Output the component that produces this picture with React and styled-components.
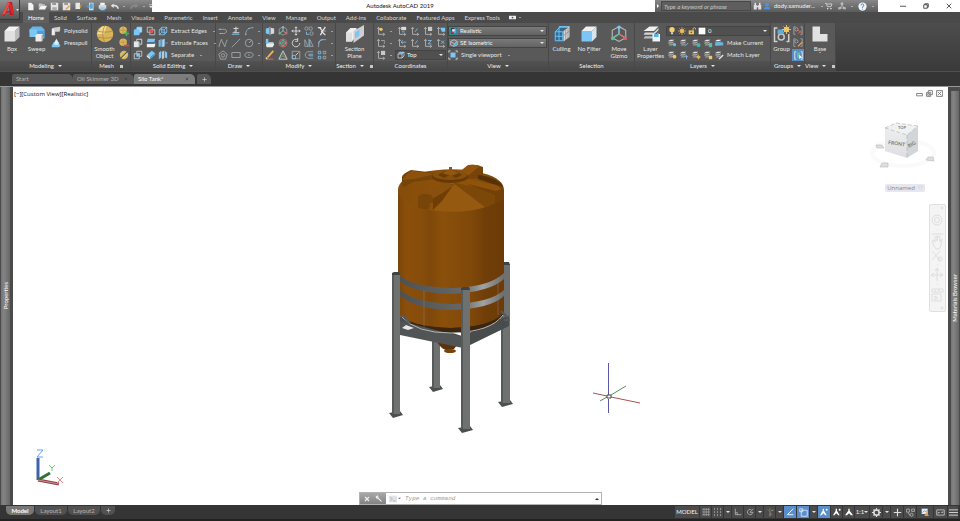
import React from "react";
import styled, { createGlobalStyle, css } from "styled-components";

const W = "#e4e4e4";
const B = "#7cc6f5";
const Y = "#f2c768";
const R = "#e0605e";
const G = "#55c79a";
const D = "#a6abaf";

const Global = createGlobalStyle`
  * { box-sizing: border-box; }
  body { margin: 0; background: #333; }
  button, input, select { font: inherit; color: inherit; border: 0; padding: 0; margin: 0; background: none; border-radius: 0; }
  button { cursor: pointer; }
  h1, h2 { margin: 0; font-weight: 400; font-size: 6px; }
`;

const App_ = styled.div`
  display: flex;
  flex-direction: column;
  min-height: 100vh;
  background: #363636;
  color: #e6e6e6;
  font-family: Lato, "Open Sans", sans-serif;
  font-size: 6px;
  line-height: 8px;
  white-space: nowrap;
`;

/* ---------- icons ---------- */

const Svg = styled.svg`
  display: block;
  flex: none;
  width: ${(p) => p.$w || 12}px;
  height: ${(p) => p.$h || p.$w || 12}px;
`;

const line = (d, c = W, w = 1) => <path d={d} fill="none" stroke={c} strokeWidth={w} />;
const fill = (d, c = W) => <path d={d} fill={c} />;
const cube = (a, b, c) => (
  <>
    {fill("M1 4l3-3h7l-3 3z", a)}
    {fill("M1 4h7v7H1z", b)}
    {fill("M8 4l3-3v7l-3 3z", c)}
  </>
);
const axes = (extra) => (
  <>
    {line("M3 2v8h7M1.500 3.500L3 1.500l1.500 2M8.500 8.500L10.500 10l-2 1.500", "#c4c4c4", 0.9)}
    {extra}
  </>
);
const layer = (extra, c = W) => (
  <>
    {fill("M1 4l3-2h5L6 4z", c)}
    {fill("M1 6.500L2.500 5.200H6l2-1.200v1L6 6.500z", "#b8b8b8")}
    {fill("M2 9l1-1.500h3L8 6v1.400L6 9z", "#a0a0a0")}
    {extra}
  </>
);
const grp = (x, y) => <circle cx={x} cy={y} r="2" fill="none" stroke={D} />;

const icons = {
  new: fill("M3 1h4l3 3v7H3z", "#f4f4f4"),
  open: <>{fill("M1 2h4l1 1h3v2H3l-2 5z", "#c8c8c8")}{fill("M3.500 5H12l-2.500 5H1z", "#f4f4f4")}</>,
  save: <>{fill("M1 1h9l1 1v9H1z", "#e4e4e4")}{fill("M3 1h5v3H3z", "#999")}{fill("M3 7h6v4H3z", "#aaa")}</>,
  saveas: <>{fill("M1 1h9l1 1v9H1z", "#e4e4e4")}{fill("M3 1h5v3H3z", "#999")}{line("M5 10l5-5", "#f0a040", 2)}</>,
  web: <>{fill("M2 1h6v9H2z", "#e8e8e8")}{fill("M7 5h4l-2-2v6z", "#e0a040")}{line("M2 10h6", "#555")}</>,
  mobile: <>{fill("M4 1h6v10H4z", "#ddd")}{fill("M5 2h4v7H5z", "#57a6d8")}{line("M1 6h5M3.500 4L1.500 6l2 2", "#4aa3df")}</>,
  print: <>{fill("M3 1h6v3H3z", "#f6f6f6")}{fill("M1 4h10v5H1z", "#d8d8d8")}{fill("M3 7h6v4H3z", "#8ecdf0")}</>,
  undo: <>{fill("M1 5l4-3v6z", W)}{line("M4 5c4-1 6 0 7 4", W, 1.800)}</>,
  redo: <>{fill("M11 5L7 2v6z", "#8b8b8b")}{line("M8 5c-4-1-6 0-7 4", "#8b8b8b", 1.800)}</>,
  more: <>{line("M3 4h6", W)}{fill("M3 6h6l-3 3z")}</>,
  box: cube("#f3f3f3", "#e0e0e0", "#bdbdbd"),
  sweep: (
    <>
      {fill("M1 3l2-2h6l2 2v6H8V5H1z", "#65b4ec")}
      {fill("M1 3h5v5H1z", B)}
      {fill("M6 4h5v4H6z", "#4f9edb")}
      {fill("M5 7l1-1h4v4l-1 1H5z", "#ededed")}
      {fill("M9 7l1-1v4l-1 1z", "#aaa")}
    </>
  ),
  polysolid: <>{fill("M1 3l2-1 8-1v4l-1 2H5v4H1z", "#cfcfcf")}{fill("M1 4h3v7H1z", "#efefef")}</>,
  presspull: <>{fill("M1 9l2-4h6l2 4-1 2H1z", B)}{fill("M4 5l2.500-4L9 5v3H4z", "#d8efff")}</>,
  smooth: (
    <>
      <circle cx="6" cy="6" r="5.500" fill="#d9b45b" />
      <path d="M2 3.500a5 5 0 0 1 5-2.800L5.500 6H.7z" fill="#f2dc93" />
      {line("M6 .500c-2 3-2 8 0 11M1 4c3 1 7 1 10 0M1 8c3 1 7 1 10 0", "#a8853a", 0.5)}
    </>
  ),
  mesh1: <><circle cx="5" cy="5" r="4.500" fill="#dab860" />{line("M5 .500v9M.500 5h9", "#a3823b", 0.6)}{line("M9 6v6M6 9h6", "#3fb45e", 1.800)}</>,
  mesh2: <><circle cx="5" cy="5" r="4.500" fill="#dab860" />{line("M5 .500v9M.500 5h9", "#a3823b", 0.6)}{line("M6 9h6", "#e2474a", 2)}</>,
  mesh3: <><circle cx="6" cy="6" r="5" fill="#dab860" />{line("M2 10l8-8", "#5a5a5a", 1.500)}{line("M4 10l6-6", "#f5e3a5")}</>,
  union: <>{fill("M1 5l1-1h2V2l1-1h6v6l-1 1H8v2l-1 1H1z", B)}{fill("M5 2h5v5H8V4H5z", "#a7dcff")}</>,
  interfere: <>{line("M1.500 1.500h6v6h-6zM4.500 4.500h6v6h-6z", "#c9c9c9")}{fill("M4 4h4v4H4z", "#e84b50")}</>,
  extract: <>{line("M1.500 4.500h6v6h-6zM4.500 1.500h6v6h-6zM1.500 4.500l3-3M7.500 4.500l3-3M7.500 10.500l3-3M1.500 10.500l3-3", B)}</>,
  subtract: <>{line("M4.500 4V1.500h6v6H8", W)}{fill("M1 4h6v7H1z", "#e6e6e6")}{fill("M7 4l1 1v5l-1 1z", B)}</>,
  slice: <>{fill("M2 1h9l-1 4H1z", B)}{fill("M1 7h9l1-2v4l-1 2H1z", "#f0f0f0")}{line("M1 6h10", "#2d6ea0")}</>,
  extrude: <>{line("M3.500 1.500v9M1.500 2.500v8", B, 1.500)}{fill("M5 2l3-1v9l-3 1z", "#a5d8f8")}{line("M8 6h4", "#4aa3df")}</>,
  intersect: <>{line("M4.500 4V1.500h6v6H8M1.500 4.500h6v6h-6z", "#cfcfcf")}{fill("M4 4h4v4H4z", B)}</>,
  thicken: <>{fill("M1 6l6-5 4 3-6 5z", B)}{fill("M1 6l4 3v2L1 8z", "#eee")}{fill("M5 9l6-5v2l-6 5z", "#5a9cc9")}</>,
  separate: <>{fill("M1 3l3-2v8l-3 2z", B)}{fill("M5 2l2-1v9l-2 1z", "#ddd")}{fill("M8 1l3 2v7L8 9z", B)}</>,
  polyline: <>{line("M1 4h7c3 0 3 5-1 5H2", D)}{line("M1 4h2M2 9h2", B)}</>,
  line3: <>{line("M2 8h8M6 1v7M3 3h6", "#d6d6d6", 1.300)}{line("M1 10h9", B)}{line("M3 8l5-6", D)}</>,
  arc: <>{line("M2 11C2 5 5 2 11 2", D)}{line("M1 10h2M5 3h2M10 2h1", B)}</>,
  spline: <>{line("M1 10L4 2l4 8 3-8", D)}{line("M1 10h1M4 2h1M8 10h1", B)}</>,
  xline: line("M1 11L11 1", D),
  circle: <>{line("M6 6l3-3", B)}<circle cx="6" cy="6" r="4.500" fill="none" stroke={D} /></>,
  polygon: <><path d="M6 1l5 4-2 6H3L1 5z" fill="none" stroke={D} /><circle cx="6" cy="6.500" r="2" fill="none" stroke={D} /></>,
  rect: line("M1 3h10v6H1z", D),
  ellipse: <><ellipse cx="6" cy="6" rx="5" ry="3" fill="none" stroke={D} />{line("M5 6h2", B)}</>,
  mirror3: <>{fill("M1 3l4-1v8l-4-1z", B)}{line("M6 1v10", W, 0.8)}{fill("M7 2l4 1v6l-4 1z", "#d8d8d8")}</>,
  gizmo: (
    <>
      {line("M6 1l4.500 2.500v5L6 11 1.500 8.500v-5zM6 6v-5M6 6l5 3M6 6L1 9", "#bdbdbd", 0.7)}
      {line("M6 6V1", B, 0.7)}{line("M6 6L1.800 9", G, 0.7)}{line("M6 6l4.200 3", R, 0.7)}
      <circle cx="6" cy="1.500" r="1.200" fill={B} /><circle cx="1.800" cy="9" r="1.200" fill={G} /><circle cx="10.200" cy="9" r="1.200" fill={R} />
    </>
  ),
  moveicon: line("M6 1v10M1 6h10M4.500 2.500L6 1l1.500 1.500M4.500 9.500L6 11l1.500-1.500M2.500 4.500L1 6l1.500 1.500M9.500 4.500L11 6l-1.500 1.500", W),
  copy: <>{grp(3, 3)}{grp(8, 3)}{grp(9, 9)}{line("M3 7v3h3", B)}</>,
  trim: <>{line("M1 2h4M3 2l4 4M10 1L4 11M5 6l5 5", "#e6e6e6", 1.500)}{line("M7 6h4", "#aaa")}</>,
  align: <>{fill("M1 1h3v6H1z", B)}{fill("M1 8l4-3h5l1 3-2 3H2z", "#eaeaea")}{line("M4 6h6", B)}</>,
  rotate3: <><circle cx="6" cy="6" r="4.800" fill="none" stroke={R} /><circle cx="6" cy="6" r="3" fill="none" stroke={G} />{line("M6 1v10M1 6h10", D, 0.7)}</>,
  rotate: line("M8 2a4.500 4.500 0 1 0 2.500 4M8 0v4h-3", W),
  mirror: <>{line("M1 10V2l4 8z", D)}{line("M6 1v10", B)}{line("M7 10V2l4 8z", D)}</>,
  fillet: <>{line("M2 11V7c0-3 2-5 5-5h4", D)}{line("M2 7c0-3 2-5 5-5", B)}</>,
  erase: <>{line("M3 9l7-8", "#f0b646", 2.200)}{fill("M1 8l3 3H1z", "#f1e0b0")}{line("M3 11h7", R, 1.200)}</>,
  scale3: <>{line("M6 1l5 10H1z", W)}{line("M6 1v6M6 7l4 3M6 7l-4 3", G, 0.8)}{line("M6 7l4 3", R)}</>,
  scale: <>{line("M1.500 1.500h9v9h-9z", D)}{line("M1.500 6.500h4v4h-4z", B)}{line("M6 6l3-3", W)}</>,
  offset: <>{line("M11 2H6C0 2 0 10 6 10h5", D)}{line("M11 5H7c-2 0-2 2 0 2h4", B)}</>,
  array: <>{line("M1.500 1.500h3v3h-3zM1.500 7.500h3v3h-3z", B)}{line("M7.500 1.500h3v3h-3zM7.500 7.500h3v3h-3z", D)}</>,
  section: <>{fill("M0 5l3-3h4v5l-3 4H0z", "#f0f0f0")}{fill("M5 4l7-4v7l-7 5z", "#cfcfcf")}{fill("M6 5l3-2v4L6 9z", B)}{fill("M0 5h4v6H0z", "#dedede")}</>,
  ucs1: axes(<circle cx="6" cy="4" r="2" fill={Y} />),
  ucs2: axes(<>{fill("M5 1h6v4H5z", "#dadada")}{line("M6 7h3", B)}</>),
  ucs3: axes(line("M6 7l3-4", B)),
  ucs4: axes(fill("M6 1h5v5H6z", "#c8c8c8")),
  ucs5: axes(fill("M5 2h6v5H7z", B)),
  ucs6: axes(line("M6 3h4v4", D)),
  ucs7: axes(line("M5 5h6M7 3L5 5l2 2", B)),
  ucs8: axes(line("M6 3l4 4M10 3L6 7", B)),
  ucs9: axes(line("M6 3h4L6 7h4", B)),
  culling: (
    <>
      {fill("M1 4l3-3h3v10H1z", "#2f6c95")}
      {line("M1.500 4.500h5v6h-5zM4 1.500v9M1.500 7.500h5M1.500 4.500l3-3h6l-3 3M4 1l7 0", B, 0.6)}
      {fill("M7 4l4-3v7l-4 3z", "#d5d5d5")}
      {line("M8.500 3v7M10 2v7M7 7l4-3", "#888", 0.5)}
    </>
  ),
  nofilter: cube("#f0f0f0", B, "#d8e4ec"),
  props: (
    <>
      {fill("M1 4l4-3h6L8 4z", "#f0f0f0")}
      {fill("M1 6.500L2 5h6l3-3v1.500L8 6.500z", "#d4d4d4")}
      {fill("M1 9l1-1.500h6L11 5v1L8 9z", "#bdbdbd")}
      {fill("M7 6h5v5H7z", "#e9f6ff")}
      {fill("M8 6h3v2H8z", "#57afe8")}
    </>
  ),
  l1: layer(<circle cx="9" cy="8" r="2" fill="#52c9dc" />),
  l2: layer(line("M7 10l4-4", "#7fc0e8")),
  l3: layer(<circle cx="9" cy="8.500" r="2.500" fill="#3fb8a8" />),
  l4: layer(fill("M7 6h4v5H7z", "#55bcae")),
  l5: layer(fill("M2 5h9v4H1z", "#68b3e0"), "#f5f5f5"),
  l6: layer(<circle cx="9" cy="8" r="2.200" fill={Y} />),
  l7: layer(line("M7 8h4M9 6v5", "#7fb6e8")),
  l8: layer(<><circle cx="9" cy="8.500" r="2" fill="#efb347" />{line("M9 5.500v6M6 8.500h6", "#efb347", 0.7)}</>),
  l9: layer(fill("M7 7h4v4H7z", Y)),
  l10: layer(line("M6 11l5-5", "#eee", 1.500)),
  bulb: <><circle cx="6" cy="4" r="4" fill="#f4cf74" />{fill("M4.500 8h3v3h-3z", "#cfcfcf")}</>,
  sun: <><circle cx="6" cy="6" r="3" fill="#f4bd54" />{line("M6 0v12M0 6h12M2 2l8 8M10 2l-8 8", "#f4bd54", 1)}</>,
  lock: <>{fill("M1 5h8v6H1z", "#f0bd59")}{line("M7.500 5V3a2 2 0 0 1 4 0v1", "#f0bd59", 1.200)}{fill("M4 7h2v2H4z", "#6b5020")}</>,
  swatch: fill("M1 1h10v10H1z", "#fff"),
  group: (
    <>
      {line("M3 2H1v9h2M9 11h1.500V6", "#d0d0d0")}
      <circle cx="5.500" cy="8" r="2" fill="none" stroke="#c6c6c6" />
      {fill("M3 3h4v3H3z", "#5aaee0")}
      <circle cx="9" cy="3" r="1.800" fill={Y} />{line("M9 0v6M6 3h6M7 1l4 4M11 1L7 5", Y, 0.6)}
    </>
  ),
  ungroup: <>{line("M3 1H1v9h2M9 1h2v9H9", D)}{grp(4, 4)}{line("M6 5l5 4M11 5L6 9", R, 1.200)}</>,
  groupedit: <>{line("M3 1H1v9h2M9 1h2v9H9", D)}{grp(4, 4)}{line("M6 10l5-5", "#efaa4d", 1.500)}</>,
  grpsel: <>{line("M3 1H1v10h2M9 1h2v10H9", "#fff")}{fill("M4 2h4v7H4z", G)}{fill("M7 5l4 4H9l-2 2z", "#fff")}</>,
  base: fill("M1 1h5v5h5v5H1z", "#e2e2e2"),
  realistic: <>{fill("M0 0h12v12H0z", "#174850")}{fill("M2 5h4v5H2z", "#ce3941")}{fill("M6 2h4v8H6z", "#5ea5e4")}<circle cx="5" cy="5" r="2" fill="#e8e8e8" />{line("M.500.500h11v11H.500z", "#4fc0bf")}</>,
  iso: <>{line("M6 1l5 3v5l-5 2-5-2V4zM1 4l5 3 5-3M6 7v4", "#cfdde6")}{fill("M6 7l4-2.500v4L6 10.500z", "#62b5ea")}</>,
  top: <>{line("M1.500 4.500h6v6h-6zM7.500 4.500l3-3v6l-3 3", W)}{fill("M1 4l3-3h7L8 4z", B)}</>,
  viewport: <>{line("M3 1H1v2M9 1h2v2M3 11H1V9M9 11h2V9", W)}{fill("M3 3h6v6H3z", B)}</>,
  rec: <>{fill("M0 3h12v6H0z", "#eee")}<circle cx="6" cy="6" r="1.500" fill="#555" /></>,
  find: fill("M1 4h4v6H1zM7 4h4v6H7zM2 1h2v3H2zM8 1h2v3H8zM5 5h2v2H5z", "#e0e0e0"),
  user: <><circle cx="6" cy="4" r="3" fill="#4f91df" />{fill("M1 11c0-3 2-4 5-4s5 1 5 4z", "#4f91df")}</>,
  cart: <>{line("M0 2h2l1.500 5H9l1.500-4H3", "#ddd", 1.200)}{fill("M3 9h2v2H3zM8 9h2v2H8z")}</>,
  share: line("M6 1v4M6 5L2 10M6 5l4 5M4.500 1.500h3v2h-3zM.500 8.500h3v2h-3zM8.500 8.500h3v2h-3zM3 9h6", "#d7d7d7"),
  help: <><circle cx="6" cy="6" r="5.500" fill="#edf4fb" />{line("M4 4.500c0-3 4.500-2 3.500.500L6 7v1M6 9v1", "#356ca8", 1.200)}</>,
  min: line("M0 6.500h12", "#222", 1.500),
  max: line("M1.500 3.500h7v7h-7zM3.500 3V1.500h7v7H9", "#222", 1.500),
  close: line("M1.500 1.500l9 9M10.500 1.500l-9 9", "#222", 1.500),
  tabx: line("M2 2l8 8M10 2l-8 8", "#3f3f3f", 2),
  plus: line("M6 1v10M1 6h10", "#dedede", 1.500),
  grid: line("M3 0v12M6.500 0v12M10 0v12M0 2h12M0 6h12M0 10h12", "#cfcfcf", 0.7),
  ortho: line("M2 1v9h9M2 7h3v3", "#c7c7c7"),
  polar: line("M10 7a4 4 0 1 1-2-4.500M6 6.500h5M6 6.500L11 1", "#c7c7c7"),
  isodraft: <>{line("M2 1l8 10", "#bc5b58")}{line("M6 0v8", "#4aa96e")}{line("M6 8v4M8 4l3-1", "#c7c7c7")}</>,
  otrack: line("M11 1L2 10h9", "#fff", 1.300),
  osnap: line("M3 3h8v8H3zM1 1h4v4H1z", "#e5f3ff"),
  anno: fill("M5 1h2v3l5 7H9L6 8l-3 3H0l5-7z", "#fff"),
  annoA: <>{fill("M4 1h2v3l4 7H8L5 8l-3 3H0l4-7z", "#fff")}<circle cx="10" cy="2.500" r="1.500" fill="#fff" /></>,
  gear: <><circle cx="6" cy="6" r="3.500" fill="none" stroke="#e0e0e0" strokeWidth="2" />{line("M6 0v3M6 9v3M0 6h3M9 6h3M2 2l2 2M8 8l2 2M10 2L8 4M4 8l-2 2", "#e0e0e0", 1.500)}</>,
  shapes: <>{line("M.500 1.500h4v4h-4zM7.500 1.500h4v3h-4zM3 6l2 4", "#bdbdbd")}<circle cx="7.500" cy="9" r="2" fill="none" stroke="#bdbdbd" /></>,
  perf: <>{fill("M1 1h9v8H1z", "#e4edf4")}{line("M2 7l3-3 2 2 3-3", "#4a8abd")}{fill("M8 6l4 6H5z", "#ef9a45")}</>,
  clean: <>{line("M1 2.500h10v7H1z", "#d6d6d6")}{line("M7 6h2V4.500M5 6H3v1.500", "#d6d6d6")}</>,
  menu: line("M0 2.500h12M0 6h12M0 9.500h12", "#dedede", 1.200),
  wrench: <>{line("M4 4l7 7", "#eee", 2)}{fill("M1 1l2 1 1-2 2 3-1 3-3 0z", "#eee")}</>,
  whitex: line("M2 2l8 8M10 2l-8 8", "#eee", 2.500),
  prompt: <>{fill("M0 1h12v10H0z", "#dfe4e9")}{line("M2 3l3 3-3 3M6 9h4", "#9ba3ab")}</>,
};

const Icon = ({ n, w = 10, h }) => (
  <Svg viewBox="0 0 12 12" $w={w} $h={h} aria-hidden="true">{icons[n]}</Svg>
);

/* ---------- title bar ---------- */

const Header = styled.header`
  display: grid;
  grid-template-columns: 20px 1fr;
  grid-template-rows: 12px 11px;
  background: #4b4b4b;
`;
const AppButton = styled.button`
  grid-row: 1 / 3;
  height: 20px;
  display: flex;
  align-items: center;
  justify-content: center;
  background: linear-gradient(#929292, #555);
  border-right: 1px solid #373737;
  border-bottom: 1px solid #373737;
`;
const TitleRow = styled.div`
  display: flex;
  background: #fff;
  color: #222;
`;
const Quick = styled.div`
  display: flex;
  align-items: center;
  width: 132px;
  padding-left: 4px;
  background: linear-gradient(#8a8a8a, #5d5d5d);
`;
const IconButton = styled.button`
  display: flex;
  align-items: center;
  justify-content: center;
  flex: none;
  width: ${(p) => p.$w || 12}px;
  height: ${(p) => p.$h || 12}px;
  ${(p) => p.$on && css`background: #5a8cc6;`}
`;
const Title = styled.h1`
  flex: 1;
  padding-right: 7px;
  text-align: center;
  line-height: 12px;
  color: #111;
`;
const Info = styled.div`
  display: flex;
  align-items: center;
  width: 223px;
  color: #eee;
  background: linear-gradient(#878787, #5b5b5b);
`;
const Search = styled.input`
  width: 90px;
  height: 10px;
  padding: 0 2px;
  background: #5e5e5e;
  border: 1px solid #494949;
  font-style: italic;
  outline: 0;
  &::placeholder { color: #c8c8c8; opacity: 1; }
`;
const UserButton = styled.button`
  display: flex;
  align-items: center;
  gap: 3px;
  width: 58px;
  color: #f4f4f4;
`;
const WindowButtons = styled.div`
  display: flex;
  align-items: center;
  justify-content: flex-end;
  width: 82px;
`;
const MenuRow = styled.nav`
  display: flex;
  padding-left: 3px;
  background: #4a4a4a;
`;
const MenuTab = styled.button`
  height: 11px;
  padding: 0 5px;
  color: ${(p) => (p.$on ? "#fff" : "#d8d8d8")};
  background: ${(p) => (p.$on ? "#606060" : "none")};
`;

/* ---------- ribbon ---------- */

const Ribbon = styled.div`
  display: flex;
  height: 49px;
  background: linear-gradient(#4d4d4d, #3a3a3a);
  border-bottom: 1px solid #4f4f4f;
`;
const PanelBox = styled.section`
  flex: none;
  display: flex;
  flex-direction: column;
  width: ${(p) => p.$w}px;
  background: #595959;
  border-right: 1px solid #484848;
`;
const PanelBody = styled.div`
  flex: 1;
  display: flex;
  padding: 2px 0 0 ${(p) => p.$pad}px;
`;
const PanelTitle = styled.h2`
  display: flex;
  align-items: center;
  justify-content: center;
  gap: 4px;
  height: 10px;
  color: #eee;
  background: linear-gradient(#525252, #474747);
`;
const Stack = styled.div`
  display: flex;
  flex-direction: column;
`;
const Row = styled.div`
  display: flex;
  align-items: center;
  height: 12px;
`;
const BigButton = styled.button`
  display: flex;
  flex-direction: column;
  align-items: center;
  width: ${(p) => p.$w}px;
  height: 36px;
  line-height: 7px;
  text-align: center;
  white-space: pre-line;
`;
const BigLabel = styled.span`
  padding-top: 2px;
`;
const TextButton = styled.button`
  display: flex;
  align-items: center;
  gap: 3px;
  height: 12px;
`;
const Arrow = styled.span`
  flex: none;
  width: 0;
  height: 0;
  border: 2px solid transparent;
  border-top-color: #e6e6e6;
  border-bottom-width: 0;
  ${(p) => p.$small && css`border-left-width: 1px; border-right-width: 1px; border-top-width: 1px; margin: 0 3px;`}
`;
const Launcher = styled.span`
  width: 3px;
  height: 3px;
  margin-left: 2px;
  background: #c8c8c8;
`;
const Drop = styled.label`
  display: flex;
  align-items: center;
  gap: 2px;
  height: 10px;
  width: ${(p) => p.$w}px;
  padding: 0 2px 0 1px;
  background: ${(p) => (p.$dark ? "#505050" : "linear-gradient(#7a7a7a, #636363)")};
  border: 1px solid #444;
  color: #f4f4f4;
`;
const Select = styled.select`
  flex: 1;
  min-width: 0;
  height: 8px;
  line-height: 8px;
  appearance: none;
  outline: 0;
`;

const Big = ({ n, w, label, drop, size = 18 }) => (
  <BigButton $w={w}>
    <Icon n={n} w={size} />
    <BigLabel>{label}</BigLabel>
    {drop && <Arrow $small />}
  </BigButton>
);
const Ic = ({ n, w = 13, label }) => (
  <IconButton $w={w} aria-label={label || n}><Icon n={n} w={10} /></IconButton>
);
const Tx = ({ n, children, drop }) => (
  <TextButton>{n && <Icon n={n} w={10} />}{children}{drop && <Arrow $small />}</TextButton>
);
const Combo = ({ w, list, value, label, dark }) => (
  <Drop $w={w} $dark={dark}>
    {list.map((n) => <Icon key={n} n={n} w={8} />)}
    <Select aria-label={label} defaultValue={value}><option>{value}</option></Select>
    <Arrow />
  </Drop>
);
const Panel = ({ w, pad = 0, title, drop, launch, children }) => (
  <PanelBox $w={w}>
    <PanelBody $pad={pad}>{children}</PanelBody>
    <PanelTitle>{title}{drop && <Arrow />}{launch && <Launcher />}</PanelTitle>
  </PanelBox>
);
const IconRow = ({ list, w, drop }) => (
  <Row>{list.map((n) => <Ic key={n} n={n} w={w} />)}{drop && <Arrow $small />}</Row>
);

/* ---------- file tabs ---------- */

const FileTabs = styled.div`
  display: flex;
  align-items: flex-end;
  height: 15px;
  padding: 0 0 2px 12px;
  background: #353535;
  border-bottom: 1px solid #999;
`;
const FileTab = styled.button`
  display: flex;
  align-items: center;
  justify-content: space-between;
  width: ${(p) => p.$w}px;
  height: 10px;
  padding: 0 6px 0 4px;
  border-radius: 2px 5px 0 0;
  color: ${(p) => (p.$on ? "#fff" : "#b4b4b4")};
  background: ${(p) => (p.$on ? "#7d7d7d" : "#585858")};
  ${(p) => p.$center && css`justify-content: center; padding: 0; margin-left: 2px;`}
`;

/* ---------- work area ---------- */

const Work = styled.main`
  flex: 1;
  display: flex;
  min-height: 300px;
`;
const Palette = styled.aside`
  flex: none;
  display: flex;
  align-items: center;
  justify-content: center;
  width: ${(p) => (p.$right ? 12 : 13)}px;
  color: #fff;
  background: linear-gradient(90deg, #747474, #848484 30%, #666);
  border-style: solid;
  border-color: #4b4b4b;
  border-width: ${(p) => (p.$right ? "4px 1px 0 3px" : "0 3px 0 1px")};
`;
const Vertical = styled.span`
  writing-mode: vertical-rl;
  transform: rotate(180deg);
`;
const Canvas = styled.div`
  position: relative;
  flex: 1;
  min-width: 0;
  background: #fff;
  color: #111;
  overflow: hidden;
`;
const Scene = styled.svg`
  position: absolute;
  inset: 0;
  width: 100%;
  height: 100%;
`;
const ViewLabel = styled.div`
  position: absolute;
  left: 1px;
  top: 3px;
  font-family: "Open Sans", sans-serif;
`;
const ViewWindow = styled.div`
  position: absolute;
  right: 5px;
  top: 3px;
  display: flex;
  gap: 3px;
`;
const CubeArea = styled.div`
  position: absolute;
  right: 6px;
  top: 31px;
  display: flex;
  flex-direction: column;
  align-items: center;
  width: 74px;
`;
const Unnamed = styled.button`
  display: flex;
  align-items: center;
  gap: 3px;
  height: 8px;
  padding: 0 2px;
  margin-top: 14px;
  color: #85858f;
  background: #e7e7ef;
  border-radius: 2px;
  font-family: "Open Sans", sans-serif;
`;
const NavBar = styled.div`
  position: absolute;
  right: 2px;
  top: 117px;
  width: 17px;
  height: 108px;
  border: 1px solid #e0e0e0;
  border-radius: 2px;
  background: #f4f4f4;
`;
const Ucs = styled.svg`
  position: absolute;
  left: 17px;
  bottom: 15px;
  width: 40px;
  height: 44px;
`;
const CommandLine = styled.div`
  position: absolute;
  left: 0;
  right: 0;
  bottom: 0;
  display: flex;
  width: 26%;
  min-width: 200px;
  height: 13px;
  margin: 0 auto;
  background: #fff;
  border: 1px solid #b2b2b2;
`;
const CommandTools = styled.div`
  display: flex;
  align-items: center;
  justify-content: space-evenly;
  width: 26px;
  background: linear-gradient(#a8a8a8, #838383);
`;
const CommandInput = styled.input`
  flex: 1;
  min-width: 0;
  padding-left: 2px;
  outline: 0;
  font-family: "Liberation Mono", monospace;
  font-style: italic;
  &::placeholder { color: #999; opacity: 1; }
`;
const CommandPrompt = styled.div`
  display: flex;
  align-items: center;
  gap: 1px;
  padding: 0 2px 0 3px;
  color: #777;
`;
const UpArrow = styled.button`
  display: flex;
  align-items: center;
  width: 6px;
`;

/* ---------- status bar ---------- */

const Status = styled.footer`
  display: flex;
  justify-content: space-between;
  height: 16px;
  background: #353535;
  border-bottom: 2px solid #222;
`;
const LayoutTabs = styled.div`
  display: flex;
  align-items: flex-start;
  gap: 1px;
  padding: 1px 0 0 6px;
`;
const LayoutTab = styled.button`
  height: 9px;
  width: ${(p) => p.$w}px;
  border-radius: 0 0 5px 5px;
  color: ${(p) => (p.$on ? "#fff" : "#b4b4b4")};
  font-weight: ${(p) => (p.$on ? 700 : 400)};
  background: ${(p) => (p.$on ? "#777" : "#515151")};
  display: flex;
  align-items: center;
  justify-content: center;
`;
const StatusTools = styled.div`
  display: flex;
  align-items: center;
  gap: 1px;
  padding-right: 2px;
`;
const StatusButton = styled.button`
  display: flex;
  align-items: center;
  justify-content: center;
  width: ${(p) => p.$w || 12}px;
  height: 12px;
  color: #f4f4f4;
  background: ${(p) => (p.$on ? "#5b8ecb" : "#4b4b4b")};
`;

const Leg = ({ x, y, h, w = 9 }) => (
  <>
    <path d={`M${x - 3} ${y + h - 2}l${w + 3}-2 3 4-${w + 2} 3z`} fill="#4c4f4f" />
    <rect x={x} y={y} width={w} height={h - 1} fill="#6f7171" />
    <rect x={x} y={y} width="2" height={h - 1} fill="#575a5a" />
    <path d={`M${x} ${y + 1}v-2l2-1h${w - 3}l1 3z`} fill="#3f4242" />
  </>
);

const Tank = () => (
  <g>
    <defs>
      <linearGradient id="shell">
        <stop offset="0" stopColor="#7b4509" />
        <stop offset=".08" stopColor="#8b4f0b" />
        <stop offset=".24" stopColor="#864c0a" />
        <stop offset=".3" stopColor="#7f470a" />
        <stop offset=".42" stopColor="#8a500b" />
        <stop offset=".7" stopColor="#7f480a" />
        <stop offset=".82" stopColor="#703e08" />
        <stop offset="1" stopColor="#6b3b07" />
      </linearGradient>
      <linearGradient id="band">
        <stop offset="0" stopColor="#4e5151" />
        <stop offset=".6" stopColor="#656767" />
        <stop offset=".8" stopColor="#a1a3a3" />
        <stop offset="1" stopColor="#6b6d6d" />
      </linearGradient>
      <linearGradient id="dome">
        <stop offset="0" stopColor="#854d0b" />
        <stop offset=".6" stopColor="#905309" />
        <stop offset="1" stopColor="#774408" />
      </linearGradient>
    </defs>
    <Leg x={432} y={340} h={49} w={8} />
    <Leg x={501} y={264} h={140} />
    <path d="M400 316l62 20 45-20v11l-45 20-62-13z" fill="#4a4d4d" />
    <path d="M434 338l6 8q6 7 14 3l10-13z" fill="#5b340b" />
    <ellipse cx="450" cy="351" rx="6" ry="2" fill="#7a430b" />
    <path d="M400 310q6 23 52 23 44 0 52-20v-8H400z" fill="#30271c" />
    <path d="M398 190v124q12 13 53 14 42-1 53-16V190z" fill="url(#shell)" />
    <path d="M404 318q12 9 47 10 38-1 51-13-9 18-51 18-36-1-47-15z" fill="#3c2610" />
    <path d="M398 190c0-7 7-13 22-17 20-5 45-5 62 0 16 4 22 10 22 17 0 14-24 22-53 22s-53-10-53-22z" fill="url(#dome)" />
    <path d="M452 182l-19 28c15 3 38 2 52-3z" fill="#95590f" />
    <path d="M452 182l33 25 9-5-8-12z" fill="#7c480a" />
    <path d="M402 186v-9q0-3 9-7l25 3-1 6-22 3-9 5z" fill="#764308" />
    <path d="M403 180q1-5 9-9l24 3-22 5z" fill="#8c510c" />
    <path d="M457 174l12-9q7-1 14 2v11l-14 1z" fill="#774309" />
    <path d="M458 173l10-8q7-1 12 1l-11 9z" fill="#8f530d" />
    <path d="M478 175q19 2 25 12l-13-4-12-4z" fill="#563006" />
    <path d="M433 210v-13l15-12 6-1-12 17z" fill="#6f3e07" />
    <path d="M418 199q0-4 6-5l18-11 12 2-13 9q-8 4-8 5v2h-15z" fill="#87500c" />
    <path d="M418 198q0-4 7-4t8 4v5h-3l-1 6q-7 1-11-2z" fill="#784409" />
    <path d="M467 180l33 7q4 3 4 7v5l-9 5v-9l-26-10z" fill="#734108" />
    <path d="M466 179l30 6 6 4-6 2-28-7z" fill="#8f530d" />
    <ellipse cx="450" cy="177" rx="18" ry="6" fill="#683908" />
    <ellipse cx="450" cy="175" rx="17" ry="5" fill="#86500c" />
    <path d="M438 175l6-4 6 2 6-2 6 4-6 3-6-3-6 3z" fill="#6a3b07" />
    <path d="M442 173l7-3v-3h3v3l7 3-8 3z" fill="#905711" />
    <path d="M399 275q13 12 52 13 39-1 53-15v6q-14 13-53 15-37-1-52-13z" fill="url(#band)" />
    <path d="M399 289q14 13 52 15 39-1 53-14v6q-14 13-53 14-36-1-52-15z" fill="url(#band)" />
    <path d="M424 290v38M498 277v38" fill="none" stroke="#85817b" strokeWidth=".7" opacity=".7" />
    <path d="M400 321l63 16v11l-63-13z" fill="#525555" />
    <path d="M466 337l43-21v10l-43 21z" fill="#484c4c" />
    <path d="M402 328l4-3 8 3-6 2z" fill="#e8e8e8" />
    <path d="M402 317q14 16 49 16 40-1 52-18" fill="none" stroke="#b5b7b7" strokeWidth="1" />
    <path d="M402 315l8 8M397 318v12M501 311l7 7M504 320h6" stroke="#575a5a" strokeWidth="2" />
    <Leg x={392} y={274} h={141} w={8} />
    <Leg x={461} y={289} h={141} />
  </g>
);

const ViewCube = () => (
  <Svg viewBox="872 118 74 52" $w={74} $h={52} role="img" aria-label="View cube">
    <defs>
      <linearGradient id="face" x2="0" y2="1">
        <stop offset="0" stopColor="#eceeef" /><stop offset="1" stopColor="#dddfe1" />
      </linearGradient>
    </defs>
    <ellipse cx="907" cy="153" rx="31" ry="13" fill="none" stroke="#fafafa" strokeWidth="4" />
    <path d="M889 128l11-5 22 3-11 9z" fill="#f0f1f2" />
    <path d="M889 128l22 7v23l-22-7z" fill="url(#face)" />
    <path d="M911 135l11-9v25l-11 7z" fill="#d3d6d8" />
    <path d="M889 128l22 7 11-9M911 135v23M889 128l11-5 22 3" fill="none" stroke="#aaaeb0" strokeWidth=".6" strokeDasharray="4 2" />
    <g fill="#777c80" fontFamily="Lato, sans-serif" fontWeight="700" fontSize="5">
      <text x="892" y="144" transform="rotate(8 892 144)">FRONT</text>
      <text x="913" y="148" transform="rotate(-30 913 148)">RIG</text>
      <text x="902" y="129" fontSize="4">TOP</text>
    </g>
    <g fill="#dcdedf" stroke="#b9bbbc" strokeWidth=".6">
      <path d="M880 145l6 0 2 3-7 0z" /><path d="M886 163l6 0 0 4-8 0z" /><path d="M932 157l5 0 1 4-8-1z" />
    </g>
  </Svg>
);

const menu = ["Home", "Solid", "Surface", "Mesh", "Visualize", "Parametric", "Insert", "Annotate", "View", "Manage", "Output", "Add-ins", "Collaborate", "Featured Apps", "Express Tools"];

export default function App() {
  return (
    <App_>
      <Global />
      <Header>
        <AppButton aria-label="Application menu">
          <Svg viewBox="0 0 18 18" $w={18}>
            <path d="M1 14L7 1h4l2 13H9l-.500-3-4 1L3 15z" fill="#c4161d" />
            <path d="M1 14L7 1l2 1-5 11z" fill="#ef4b4b" />
            <path d="M8 5l.500 5L5.500 10.500z" fill="#7b7b7b" />
            <path d="M10 2l3 12-2-1-3-9z" fill="#da2c30" />
            <path d="M15 8h3l-1.500 2z" fill="#ddd" />
          </Svg>
        </AppButton>
        <TitleRow>
          <Quick>
            {["new", "open", "save", "saveas", "web", "mobile", "print", "undo"].map((n) => (
              <IconButton key={n} aria-label={n}><Icon n={n} w={9} /></IconButton>
            ))}
            <Arrow $small />
            <IconButton aria-label="redo"><Icon n="redo" w={9} /></IconButton>
            <Arrow $small />
            <IconButton $w={6} aria-label="customize"><Icon n="more" w={8} /></IconButton>
          </Quick>
          <Title>Autodesk AutoCAD 2019</Title>
          <Info>
            <IconButton $w={6} aria-label="collapse"><Svg viewBox="0 0 4 4" $w={4}><path d="M1 0l2 2-2 2z" fill="#fff" /></Svg></IconButton>
            <Search aria-label="Search" placeholder="Type a keyword or phrase" />
            <IconButton aria-label="find"><Icon n="find" w={9} /></IconButton>
            <UserButton><Icon n="user" w={8} />dody.samuder...<Arrow $small /></UserButton>
            <IconButton $w={15} aria-label="store"><Icon n="cart" w={8} /></IconButton>
            <IconButton aria-label="apps"><Icon n="share" w={8} /></IconButton>
            <Arrow $small />
            <IconButton $w={13} aria-label="help"><Icon n="help" w={9} /></IconButton>
            <Arrow $small />
          </Info>
          <WindowButtons>
            {["min", "max", "close"].map((n) => <IconButton key={n} $w={23} aria-label={n}><Icon n={n} w={6} /></IconButton>)}
          </WindowButtons>
        </TitleRow>
        <MenuRow>
          {menu.map((m, i) => <MenuTab key={m} $on={i === 0}>{m}</MenuTab>)}
          <IconButton $w={24} $h={11} aria-label="ribbon display"><Icon n="rec" w={7} /><Arrow $small /></IconButton>
        </MenuRow>
      </Header>

      <Ribbon>
        <Panel w={92} pad={2} title="Modeling" drop>
          <Big n="box" w={20} label="Box" drop />
          <Big n="sweep" w={29} label="Sweep" drop />
          <Stack>
            <Tx n="polysolid">Polysolid</Tx>
            <Tx n="presspull">Presspull</Tx>
          </Stack>
        </Panel>
        <Panel w={39} title="Mesh" launch>
          <Big n="smooth" w={25} label={"Smooth\nObject"} />
          <Stack>{["mesh1", "mesh2", "mesh3"].map((n) => <Ic key={n} n={n} />)}</Stack>
        </Panel>
        <Panel w={85} title="Solid Editing" drop>
          <Stack>
            <Row><Ic n="union" /><Ic n="interfere" w={14} /><Tx n="extract" drop>Extract Edges</Tx></Row>
            <Row><Ic n="subtract" /><Ic n="slice" w={14} /><Tx n="extrude" drop>Extrude Faces</Tx></Row>
            <Row><Ic n="intersect" /><Ic n="thicken" w={14} /><Tx n="separate" drop>Separate</Tx></Row>
          </Stack>
        </Panel>
        <Panel w={47} title="Draw" drop>
          <Stack>
            <IconRow list={["polyline", "line3", "arc"]} drop />
            <IconRow list={["spline", "xline", "circle"]} drop />
            <IconRow list={["polygon", "rect", "ellipse"]} drop />
          </Stack>
        </Panel>
        <Panel w={73} title="Modify" drop>
          <Stack>
            <IconRow list={["mirror3", "gizmo", "moveicon", "copy", "trim"]} drop />
            <IconRow list={["align", "rotate3", "rotate", "mirror", "fillet"]} drop />
            <IconRow list={["erase", "scale3", "scale", "offset", "array"]} drop />
          </Stack>
        </Panel>
        <Panel w={38} title="Section" drop launch>
          <Big n="section" w={37} label={"Section\nPlane"} />
        </Panel>
        <Panel w={74} title="Coordinates">
          <Stack>
            <Row><Ic n="ucs1" /><Arrow $small /><Ic n="ucs2" /><Ic n="ucs3" /><Ic n="ucs4" /><Ic n="ucs5" /></Row>
            <Row><Ic n="ucs6" /><Arrow $small /><Ic n="ucs7" /><Ic n="ucs3" /><Ic n="ucs9" /><Ic n="ucs8" /></Row>
            <Row><Ic n="ucs4" /><Arrow $small /><Combo w={51} list={["top"]} value="Top" label="Named UCS" dark /></Row>
          </Stack>
        </Panel>
        <Panel w={101} title="View" drop>
          <Stack>
            <Row><Combo w={99} list={["realistic"]} value="Realistic" label="Visual style" /></Row>
            <Row><Combo w={99} list={["iso"]} value="SE Isometric" label="3D view" /></Row>
            <Row><Tx n="viewport" drop>Single viewport</Tx></Row>
          </Stack>
        </Panel>
        <Panel w={86} title="Selection">
          <Big n="culling" w={25} label="Culling" />
          <Big n="nofilter" w={30} label="No Filter" drop />
          <Big n="gizmo" w={30} label={"Move\nGizmo"} />
        </Panel>
        <Panel w={136} title="Layers" drop>
          <Big n="props" w={31} label={"Layer\nProperties"} />
          <Stack>
            <Row><Combo w={104} list={["bulb", "sun", "lock", "swatch"]} value="0" label="Layer" dark /></Row>
            <Row>{["l1", "l2", "l3", "l4"].map((n) => <Ic key={n} n={n} w={12} />)}<Tx n="l5">Make Current</Tx></Row>
            <Row>{["l6", "l7", "l8", "l9"].map((n) => <Ic key={n} n={n} w={12} />)}<Tx n="l10">Match Layer</Tx></Row>
          </Stack>
        </Panel>
        <Panel w={34} title="Groups" drop>
          <Big n="group" w={21} label="Group" />
          <Stack>
            <Ic n="ungroup" w={12} />
            <Ic n="groupedit" w={12} />
            <IconButton $on $w={12} aria-label="group selection"><Icon n="grpsel" w={9} /></IconButton>
          </Stack>
        </Panel>
        <Panel w={31} title="View" drop launch>
          <Big n="base" w={31} label="Base" drop />
        </Panel>
      </Ribbon>

      <FileTabs>
        <FileTab $w={61}>Start</FileTab>
        <FileTab $w={61}>Oil Skimmer 3D<Icon n="tabx" w={4} /></FileTab>
        <FileTab $w={61} $on>Silo Tank*<Icon n="tabx" w={4} /></FileTab>
        <FileTab $w={14} $center aria-label="New tab"><Icon n="plus" w={5} /></FileTab>
      </FileTabs>

      <Work>
        <Palette><Vertical>Properties</Vertical></Palette>
        <Canvas>
          <Scene viewBox="13 87 935 418" role="img" aria-label="Silo tank model">
            <Tank />
            <path d="M608.500 363v32M608.500 399v14" stroke="#5a55ad" strokeWidth="1" />
            <path d="M593 393l14 3M611 397l29 6" stroke="#a85353" strokeWidth="1" />
            <path d="M600 401l7-4M611 395l15-9" stroke="#579058" strokeWidth="1" />
            <path d="M607 395h4v3h-4z" fill="#fff" stroke="#444" strokeWidth="1" />
          </Scene>
          <ViewLabel>[−][Custom View][Realistic]</ViewLabel>
          <ViewWindow>
            {["M1 6h10v4H1z", "M1 4h7v7H1zM4 4V1h7v7H8M3 6h3v3H3z", "M1 1h10v10H1zM3 3l6 6M9 3L3 9"].map((d) => (
              <Svg key={d} viewBox="0 0 12 12" $w={7}><path d={d} fill="none" stroke="#777" strokeWidth="1.500" /></Svg>
            ))}
          </ViewWindow>
          <CubeArea>
            <ViewCube />
            <Unnamed>Unnamed<Svg viewBox="0 0 6 4" $w={5} $h={4}><path d="M.500.500h5L3 3.500z" fill="#fff" stroke="#b5b5bf" strokeWidth=".6" /></Svg></Unnamed>
          </CubeArea>
          <NavBar>
            <Svg viewBox="0 0 15 106" $w={15} $h={106} fill="none" stroke="#dedede" aria-label="Navigation bar" role="img">
              <circle cx="12" cy="3" r="1" /><circle cx="12" cy="103" r="1" />
              <circle cx="7" cy="15" r="5" /><circle cx="7" cy="15" r="2.500" />
              <path d="M7 25h1M2 29h11M4 41l-2-5 2-1 1 2V32l2-1v5l1-5 2 1v5l2-3-1 6-2 4H6zM7 60h1M2 46l8 9M10 46l-8 9M7 79h1M7 64v12M2 70h11M5 66l2-3 2 3M4 68l-3 2 3 2M10 68l3 2-3 2M2 84h11v3H2zM5 84v3M9 84v3M2 89h9v7H2zM5 91l3 2-3 2z" />
              <circle cx="10" cy="54" r="2" />
            </Svg>
          </NavBar>
          <Ucs viewBox="30 446 40 44" fill="none">
            <path d="M38 480V458" stroke="#3f62a8" strokeWidth="3" />
            <path d="M38 480l12-7" stroke="#2f7435" strokeWidth="3" />
            <path d="M38 480l21 4" stroke="#8c4448" strokeWidth="3" />
            <path d="M38 480l21 4" stroke="#d48a8c" strokeWidth="1" />
            <path d="M37 450h6l-6 7h6" stroke="#67a0f0" />
            <path d="M49 465l3 3 3-3M52 468v3" stroke="#68cf70" />
            <path d="M57 477l6 6M63 477l-6 6" stroke="#ee8888" />
          </Ucs>
          <CommandLine>
            <CommandTools><Icon n="whitex" w={6} /><Icon n="wrench" w={7} /></CommandTools>
            <CommandPrompt><Icon n="prompt" w={8} /><Svg viewBox="0 0 4 4" $w={3}><path d="M0 1h4L2 3z" fill="#777" /></Svg></CommandPrompt>
            <CommandInput aria-label="Command" placeholder="Type a command" />
            <UpArrow aria-label="History"><Svg viewBox="0 0 4 4" $w={4}><path d="M0 3h4L2 1z" fill="#333" /></Svg></UpArrow>
          </CommandLine>
        </Canvas>
        <Palette $right><Vertical>Materials Browser</Vertical></Palette>
      </Work>

      <Status>
        <LayoutTabs>
          <LayoutTab $w={28} $on>Model</LayoutTab>
          <LayoutTab $w={32}>Layout1</LayoutTab>
          <LayoutTab $w={32}>Layout2</LayoutTab>
          <LayoutTab $w={14} aria-label="New layout"><Icon n="plus" w={5} /></LayoutTab>
        </LayoutTabs>
        <StatusTools>
          <StatusButton $w={24}>MODEL</StatusButton>
          <StatusButton $w={11} aria-label="grid"><Icon n="grid" w={8} /></StatusButton>
          <StatusButton $w={11} aria-label="snap"><Svg viewBox="0 0 8 8" $w={8}><path d="M0 1h8M0 4h8M0 7h8" stroke="#d5d5d5" strokeDasharray="1 2" /></Svg></StatusButton>
          <StatusButton $w={7} aria-label="snap options"><Arrow /></StatusButton>
          <StatusButton $w={11} aria-label="ortho"><Icon n="ortho" w={8} /></StatusButton>
          <StatusButton $w={11} aria-label="polar"><Icon n="polar" w={8} /></StatusButton>
          <StatusButton $w={7} aria-label="polar options"><Arrow /></StatusButton>
          <StatusButton $w={11} aria-label="isodraft"><Icon n="isodraft" w={8} /></StatusButton>
          <StatusButton $w={7} aria-label="isodraft options"><Arrow /></StatusButton>
          <StatusButton $on aria-label="object tracking"><Icon n="otrack" w={8} /></StatusButton>
          <StatusButton $on aria-label="object snap"><Icon n="osnap" w={9} /></StatusButton>
          <StatusButton $w={7} aria-label="snap list"><Arrow /></StatusButton>
          <StatusButton $on aria-label="annotation visibility"><Icon n="annoA" w={8} /></StatusButton>
          <StatusButton $w={11} aria-label="autoscale"><Icon n="annoA" w={8} /></StatusButton>
          <StatusButton $w={11} aria-label="annotation scale"><Icon n="anno" w={8} /></StatusButton>
          <StatusButton $w={14}>1:1<Arrow /></StatusButton>
          <StatusButton aria-label="workspace"><Icon n="gear" w={9} /></StatusButton>
          <StatusButton $w={7} aria-label="workspace options"><Arrow /></StatusButton>
          <StatusButton aria-label="monitor"><Icon n="plus" w={9} /></StatusButton>
          <StatusButton aria-label="isolate"><Icon n="shapes" w={9} /></StatusButton>
          <StatusButton $w={16} aria-label="performance"><Icon n="perf" w={8} /></StatusButton>
          <StatusButton $w={13} aria-label="clean screen"><Icon n="clean" w={9} /></StatusButton>
          <StatusButton $w={10} aria-label="customization"><Icon n="menu" w={9} /></StatusButton>
        </StatusTools>
      </Status>
    </App_>
  );
}
